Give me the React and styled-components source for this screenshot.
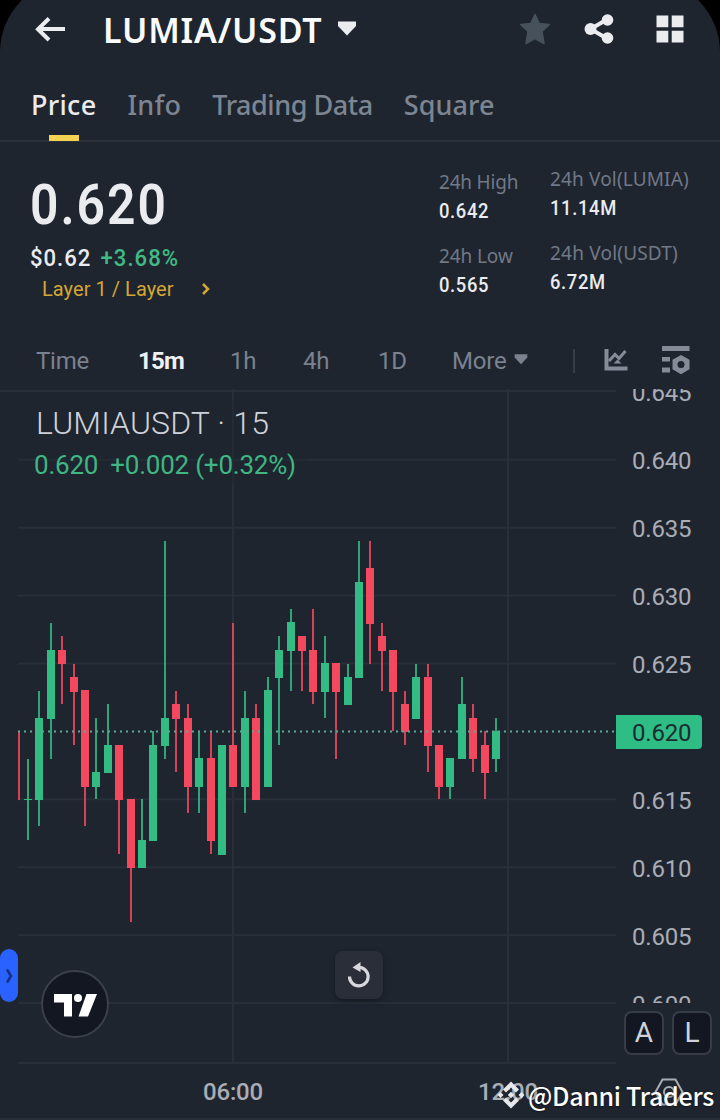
import React from 'react'
import styled, { createGlobalStyle } from 'styled-components'

const GlobalStyle = createGlobalStyle`
  body {
    margin: 0;
    background: #000;
    overflow: hidden;
  }
`

const LABEL_FONT = '"Noto Sans", "Open Sans", sans-serif'
const NUMBER_FONT = 'Roboto, "Liberation Sans", sans-serif'

const Screen = styled.div`
  box-sizing: border-box;
  position: relative;
  display: flex;
  flex-direction: column;
  width: 720px;
  height: 1140px;
  margin-top: -20px;
  padding-top: 20px;
  border-radius: 72px 72px 0 0;
  background: #1f252f;
  color: #eaecef;
  font-family: ${LABEL_FONT};
  white-space: nowrap;
  overflow: hidden;
`

const Header = styled.header`
  box-sizing: border-box;
  display: flex;
  align-items: center;
  height: 60px;
  padding: 0 36px 3px 34px;
`

const Pair = styled.h1`
  margin: 0 14px 0 35px;
  padding-top: 3px;
  font-size: 34px;
  font-weight: 600;
  line-height: 57px;
  letter-spacing: 0.8px;
  color: #fafbfc;
`

const Actions = styled.div`
  display: flex;
  align-items: center;
  gap: 34px;
  margin-left: auto;

  svg:first-child {
    margin-right: -1px;
  }

  svg:last-child {
    margin-left: 8px;
  }
`

const Tabs = styled.nav`
  box-sizing: border-box;
  display: flex;
  gap: 31px;
  height: 82px;
  padding: 0 31px;
  border-bottom: 2px solid #29303a;
`

const Tab = styled.div`
  display: flex;
  flex-direction: column;
  align-items: center;
  justify-content: space-between;
  font-size: 27px;
  font-weight: 500;
  line-height: 90px;
  height: 81px;
  letter-spacing: ${p => p.$spacing || 0}px;
  color: ${p => (p.$active ? '#eaecef' : '#7d8592')};

  &::after {
    content: '';
    width: 30px;
    height: 6px;
    margin-top: -16px;
    background: ${p => (p.$active ? '#f3d252' : 'transparent')};
  }
`

const Summary = styled.section`
  display: flex;
  height: 190px;
`

const PriceBlock = styled.div`
  width: 439px;
  padding-top: 29px;
  padding-left: 30px;
  box-sizing: border-box;
`

const LastPrice = styled.div`
  font: 600 56px/68px ${NUMBER_FONT};
  letter-spacing: 2.2px;
  transform: scaleX(0.89);
  transform-origin: left;
`

const Change = styled.div`
  display: flex;
  gap: 10px;
  font: 500 24px/38px ${NUMBER_FONT};
  letter-spacing: 1.1px;
  transform: scaleX(0.92);
  transform-origin: left;
`

const Green = styled.span`
  color: #3fba85;
`

const Layer = styled.div`
  display: flex;
  align-items: center;
  gap: 28px;
  padding-left: 12px;
  font: 400 20px/24px ${NUMBER_FONT};
  letter-spacing: 0.05px;
  color: #d3a636;
`

const StatColumn = styled.div`
  width: ${p => p.$width}px;
  padding-top: ${p => p.$top}px;
`

const Stat = styled.div`
  height: 74px;
`

const StatLabel = styled.div`
  font-size: 19px;
  line-height: 28px;
  letter-spacing: ${p => p.$spacing || 0}px;
  color: #717986;
`

const StatValue = styled.div`
  font: 500 20px/30px ${NUMBER_FONT};
  letter-spacing: 0.7px;
  transform: scaleX(0.92);
  transform-origin: left;
`

const Intervals = styled.div`
  box-sizing: border-box;
  display: flex;
  align-items: center;
  height: 57px;
  padding-left: 36px;
`

const Interval = styled.div`
  display: flex;
  align-items: center;
  gap: 8px;
  width: ${p => p.$width}px;
  padding-top: 1px;
  font: ${p => (p.$active ? 700 : 400)} 24px/54px ${NUMBER_FONT};
  letter-spacing: ${p => (p.$active ? -0.8 : -0.2)}px;
  color: ${p => (p.$active ? '#eef0f3' : '#7a828f')};

  svg {
    margin-bottom: 3px;
  }
`

const Separator = styled.div`
  width: 2px;
  height: 24px;
  margin-right: 29px;
  background: #363d48;
`

const Tools = styled.div`
  display: flex;
  align-items: center;
  gap: 33px;
  padding-bottom: 2px;
`

const ChartArea = styled.main`
  position: relative;
  display: flex;
  height: 675px;
`

const Plot = styled.svg`
  flex: none;
  display: block;
`

const PriceScale = styled.div`
  width: 104px;
  height: 614px;
  overflow: hidden;
`

const ScaleList = styled.div`
  display: flex;
  flex-direction: column;
  margin-top: -31px;
`

const ScaleRow = styled.div`
  display: flex;
  align-items: center;
  height: 68px;
`

const ScaleLabel = styled.div`
  box-sizing: border-box;
  width: 86px;
  height: 34px;
  padding-left: 16px;
  border-radius: 0 4px 4px 0;
  font: 400 24px/36px ${NUMBER_FONT};
  letter-spacing: -0.2px;
  background: ${p => (p.$current ? '#2ebd85' : 'transparent')};
  color: ${p => (p.$current ? '#1c2c30' : '#a9adb6')};
`

const Legend = styled.div`
  position: absolute;
  top: 12px;
  left: 34px;
  padding-right: 10px;
  background: rgba(31, 37, 47, 0.4);
`

const LegendName = styled.div`
  padding-left: 2px;
  font: 300 32px/44px ${NUMBER_FONT};
  letter-spacing: 0.12px;
  color: #d0d2d9;
`

const LegendValues = styled.div`
  display: flex;
  gap: 12px;
  font: 400 26px/40px ${NUMBER_FONT};
  letter-spacing: -0.22px;
  color: #3fb683;
`

const ResetButton = styled.button`
  position: absolute;
  left: 335px;
  top: 562px;
  display: flex;
  align-items: center;
  justify-content: center;
  width: 48px;
  height: 48px;
  padding: 0;
  border: 0;
  border-radius: 8px;
  background: #292e38;
  box-shadow: 0 2px 6px rgba(0, 0, 0, 0.35);
`

const TvBadge = styled.div`
  position: absolute;
  box-sizing: border-box;
  left: 41px;
  top: 581px;
  display: flex;
  width: 68px;
  height: 68px;
  border: 2px solid #3c404b;
  border-radius: 50%;
  background: #131722;
`

const DrawerHandle = styled.div`
  position: absolute;
  box-sizing: border-box;
  left: 0;
  top: 560px;
  display: flex;
  align-items: center;
  padding-left: 5px;
  width: 18px;
  height: 53px;
  border-radius: 9px;
  background: #2962ff;
`

const ScaleButtons = styled.div`
  position: absolute;
  left: 624px;
  top: 622px;
  display: flex;
  gap: 8px;
`

const ScaleButton = styled.button`
  box-sizing: border-box;
  width: 40px;
  height: 44px;
  padding: 0;
  border: 2px solid #383c47;
  border-radius: 8px;
  background: #131722;
  color: #d0d2d9;
  font: 400 28px/38px ${NUMBER_FONT};
`

const TimeAxis = styled.footer`
  box-sizing: border-box;
  display: grid;
  grid-template-columns: 370px 276px auto;
  height: 56px;
  border-bottom: 2px solid #282d37;
  font: 500 24px/56px ${NUMBER_FONT};
  letter-spacing: -0.2px;
  color: #a9adb6;
`

const TimeLabel = styled.div`
  width: ${p => p.$center * 2}px;
  text-align: center;
`

const GearCell = styled.div`
  display: flex;
  align-items: center;
  padding-left: 7px;
`

const Watermark = styled.div`
  position: absolute;
  left: 497px;
  bottom: 7px;
  display: flex;
  align-items: center;
  gap: 3px;
  color: #fff;
  font: 500 25px/36px "Noto Sans CJK SC", "Noto Sans", sans-serif;
  letter-spacing: -0.3px;
  text-shadow: 0 1px 2px rgba(0, 0, 0, 0.5);
`

const UP = '#33bb84'
const DOWN = '#f4485e'

// [direction, body top, body bottom, high, low] in thousandths
const candles = [
  ['u', 615, 615, 618, 612],
  ['u', 621, 615, 623, 613],
  ['u', 626, 621, 628, 618],
  ['d', 626, 625, 627, 622],
  ['d', 624, 623, 625, 619],
  ['d', 623, 616, 623, 613],
  ['u', 617, 616, 621, 615],
  ['u', 619, 617, 622, 617],
  ['d', 619, 615, 619, 611],
  ['d', 615, 610, 615, 606],
  ['u', 612, 610, 615, 610],
  ['u', 619, 612, 620, 612],
  ['u', 621, 619, 634, 618],
  ['d', 622, 621, 623, 617],
  ['d', 621, 616, 622, 614],
  ['u', 618, 616, 620, 614],
  ['d', 618, 612, 620, 611],
  ['u', 619, 611, 619, 611],
  ['d', 619, 616, 628, 616],
  ['u', 621, 616, 623, 614],
  ['d', 621, 615, 622, 615],
  ['u', 623, 616, 624, 616],
  ['u', 626, 624, 627, 619],
  ['u', 628, 626, 629, 623],
  ['d', 627, 626, 627, 623],
  ['d', 626, 623, 629, 622],
  ['u', 625, 623, 627, 621],
  ['d', 625, 623, 625, 618],
  ['u', 624, 622, 625, 622],
  ['u', 631, 624, 634, 624],
  ['d', 632, 628, 634, 625],
  ['d', 627, 626, 628, 623],
  ['d', 626, 623, 626, 620],
  ['d', 622, 620, 623, 619],
  ['u', 624, 621, 625, 621],
  ['d', 624, 619, 625, 617],
  ['d', 619, 616, 619, 615],
  ['u', 618, 616, 618, 615],
  ['u', 622, 618, 624, 618],
  ['d', 621, 618, 622, 617],
  ['d', 619, 617, 620, 615],
  ['u', 620, 618, 621, 617]
]

const scale = ['0.645', '0.640', '0.635', '0.630', '0.625', '0.620', '0.615', '0.610', '0.605', '0.600']

const intervals = [
  { name: 'Time', width: 102 },
  { name: '15m', width: 92, active: true },
  { name: '1h', width: 73 },
  { name: '4h', width: 75 },
  { name: '1D', width: 74 }
]

const priceY = tick => 342.4 + (620 - tick) * 13.58

const Candle = ({ index, data }) => {
  const [dir, top, bottom, high, low] = data
  const x = Math.round(27.85 + index * 11.42)
  const color = dir === 'u' ? UP : DOWN
  const bodyTop = Math.round(priceY(top) - 0.3)
  const bodyBottom = Math.round(priceY(bottom) + 0.9)
  const wickTop = Math.round(priceY(high))
  return (
    <g fill={color}>
      <rect x={x - 1} y={wickTop} width="2" height={Math.round(priceY(low)) - wickTop} opacity="0.85" />
      <rect x={x - 4} y={bodyTop} width="8" height={bodyBottom - bodyTop} />
    </g>
  )
}

const CandlePlot = () => (
  <Plot width="616" height="675" viewBox="0 0 616 675">
    <g fill="#292f39">
      <rect x="0" y="1" width="616" height="2" />
      {[640, 635, 630, 625, 615, 610, 605, 600].map(t => (
        <rect key={t} x="18" y={priceY(t) - 1} width="598" height="2" />
      ))}
      <rect x="232" y="0" width="2" height="674" />
      <rect x="507" y="0" width="2" height="674" />
      <rect x="18" y="673" width="598" height="2" />
    </g>
    <rect x="18" y="343" width="2" height="68" fill={DOWN} opacity="0.85" />
    {candles.map((c, i) => <Candle key={i} index={i} data={c} />)}
    <path d="M18 342.600H616" stroke="#5fa898" strokeWidth="2" strokeDasharray="2 4" />
  </Plot>
)

const BackIcon = () => (
  <svg width="34" height="28" viewBox="0 0 34 28" fill="none" stroke="#eaecef" strokeWidth="4">
    <path d="M31 14H5M15 3.500L4 14.200L15 25" />
  </svg>
)

const CaretIcon = ({ size, color }) => (
  <svg width={size} height={size * 0.75} viewBox="0 0 20 15" fill={color}>
    <path d="M1 0.500H19V5L10 14.500L1 5Z" />
  </svg>
)

const StarIcon = () => (
  <svg width="32" height="32" viewBox="0 0 32 32" fill="#46515b" stroke="#46515b" strokeWidth="1.500" strokeLinejoin="round">
    <path d="M16 1.500L20.300 10.500L30.300 11.500L23 18.500L25 30.500L16 25.500L7 30.500L9 18.500L1.700 11.500L11.700 10.500Z" />
  </svg>
)

const ShareIcon = () => (
  <svg width="30" height="32" viewBox="0 0 30 32" fill="#eaecef">
    <path d="M6.500 16L23 6.500M6.500 16L23 25.500" stroke="#eaecef" strokeWidth="4" />
    <circle cx="6.500" cy="16" r="6" />
    <circle cx="23.500" cy="7" r="5.800" />
    <circle cx="23.500" cy="25" r="5.800" />
  </svg>
)

const GridIcon = () => (
  <svg width="28" height="28" viewBox="0 0 28 28" fill="#eaecef">
    <path d="M0.500 0.500H12.300V12.300H0.500ZM15.700 0.500H27.500V12.300H15.700ZM0.500 15.700H12.300V27.500H0.500ZM15.700 15.700H27.500V27.500H15.700Z" />
  </svg>
)

const ChevronIcon = () => (
  <svg width="8" height="12" viewBox="0 0 8 12" fill="none" stroke="#d3a636" strokeWidth="2.500">
    <path d="M1 1L6 6L1 11" />
  </svg>
)

const IndicatorIcon = () => (
  <svg width="24" height="24" viewBox="0 0 24 24" fill="none" stroke="#858c97">
    <path d="M2.500 1V20.500H23.500" strokeWidth="4" />
    <path d="M5 13L11 6.500L15 10.500L21.500 3" strokeWidth="3" />
    <path d="M9.500 15.500L13.500 11.500L17.500 15.500Z" fill="#858c97" stroke="none" />
  </svg>
)

const SettingsIcon = () => (
  <svg width="30" height="30" viewBox="0 0 30 30" fill="#858c97">
    <path d="M1 1H28.500V6H1ZM1 12H9V16.500H1ZM1 22.500H9V27.500H1Z" />
    <path fillRule="evenodd" d="M20 10L28.500 14.700V24.300L20 29.300L11.500 24.300V14.700ZM20 16A3.500 3.500 0 1 0 20 23A3.500 3.500 0 1 0 20 16Z" />
  </svg>
)

const ResetIcon = () => (
  <svg width="24" height="28" viewBox="0 0 24 28">
    <path d="M2.500 15.500A9.300 9.300 0 1 0 11.800 6.300" fill="none" stroke="#d6d8de" strokeWidth="3.200" />
    <path d="M5.500 6.500L13.500 1V11Z" fill="#d6d8de" />
  </svg>
)

const TvLogo = () => (
  <svg width="64" height="64" viewBox="0 0 64 64" fill="#fff">
    <path d="M11 22H29V44.500H21V30.500H11Z" />
    <circle cx="35" cy="26" r="4" />
    <path d="M43.500 22H54L45 44.500H35.500Z" />
  </svg>
)

const HandleArrow = () => (
  <svg width="8" height="16" viewBox="0 0 8 16" fill="none" stroke="#14307c" strokeWidth="2.500">
    <path d="M2 1.500L6 8L2 14.500" />
  </svg>
)

const HexIcon = () => (
  <svg width="32" height="28" viewBox="0 0 32 28" fill="none" stroke="#a9adb6" strokeWidth="2">
    <path d="M9.500 1.500H22.500L29.500 14L22.500 26.500H9.500L2.500 14Z" />
    <circle cx="16" cy="14" r="5" />
  </svg>
)

const BinanceLogo = () => (
  <svg width="28" height="28" viewBox="0 0 28 28" fill="#e6e8eb">
    <path d="M14 0.500L22 8.500L19 11.500L14 6.500L9 11.500L6 8.500Z" />
    <path d="M14 27.500L22 19.500L19 16.500L14 21.500L9 16.500L6 19.500Z" />
    <path d="M14 10.800L17.200 14L14 17.200L10.800 14Z" />
    <path d="M3.500 11L6.500 14L3.500 17L0.500 14ZM24.500 11L27.500 14L24.500 17L21.500 14Z" />
  </svg>
)

const StatItem = ({ label, value, spacing }) => (
  <Stat>
    <StatLabel $spacing={spacing}>{label}</StatLabel>
    <StatValue>{value}</StatValue>
  </Stat>
)

export default function App() {
  return (
    <Screen>
      <GlobalStyle />
      <Header>
        <BackIcon />
        <Pair>LUMIA/USDT</Pair>
        <CaretIcon size={20} color="#eaecef" />
        <Actions>
          <StarIcon />
          <ShareIcon />
          <GridIcon />
        </Actions>
      </Header>

      <Tabs>
        <Tab $active $spacing={0.3}>Price</Tab>
        <Tab $spacing={0.3}>Info</Tab>
        <Tab $spacing={-0.45}>Trading Data</Tab>
        <Tab $spacing={0.1}>Square</Tab>
      </Tabs>

      <Summary>
        <PriceBlock>
          <LastPrice>0.620</LastPrice>
          <Change>
            <span>$0.62</span>
            <Green>+3.68%</Green>
          </Change>
          <Layer>
            Layer 1 / Layer
            <ChevronIcon />
          </Layer>
        </PriceBlock>
        <StatColumn $width={111} $top={26}>
          <StatItem label="24h High" value="0.642" spacing={-0.2} />
          <StatItem label="24h Low" value="0.565" spacing={-0.1} />
        </StatColumn>
        <StatColumn $width={160} $top={23}>
          <StatItem label="24h Vol(LUMIA)" value="11.14M" spacing={0.15} />
          <StatItem label="24h Vol(USDT)" value="6.72M" spacing={0.2} />
        </StatColumn>
      </Summary>

      <Intervals>
        {intervals.map(item => (
          <Interval key={item.name} $width={item.width} $active={item.active}>{item.name}</Interval>
        ))}
        <Interval $width={121}>
          More
          <CaretIcon size={14} color="#7a828f" />
        </Interval>
        <Separator />
        <Tools>
          <IndicatorIcon />
          <SettingsIcon />
        </Tools>
      </Intervals>

      <ChartArea>
        <CandlePlot />
        <PriceScale>
          <ScaleList>
            {scale.map(p => (
              <ScaleRow key={p}>
                <ScaleLabel $current={p === '0.620'}>{p}</ScaleLabel>
              </ScaleRow>
            ))}
          </ScaleList>
        </PriceScale>
        <Legend>
          <LegendName>LUMIAUSDT · 15</LegendName>
          <LegendValues>
            <span>0.620</span>
            <span>+0.002 (+0.32%)</span>
          </LegendValues>
        </Legend>
        <ResetButton><ResetIcon /></ResetButton>
        <TvBadge><TvLogo /></TvBadge>
        <DrawerHandle><HandleArrow /></DrawerHandle>
        <ScaleButtons>
          <ScaleButton>A</ScaleButton>
          <ScaleButton>L</ScaleButton>
        </ScaleButtons>
      </ChartArea>

      <TimeAxis>
        <TimeLabel $center={233}>06:00</TimeLabel>
        <TimeLabel $center={138}>12:00</TimeLabel>
        <GearCell><HexIcon /></GearCell>
      </TimeAxis>

      <Watermark>
        <BinanceLogo />
        @Danni Traders
      </Watermark>
    </Screen>
  )
}
